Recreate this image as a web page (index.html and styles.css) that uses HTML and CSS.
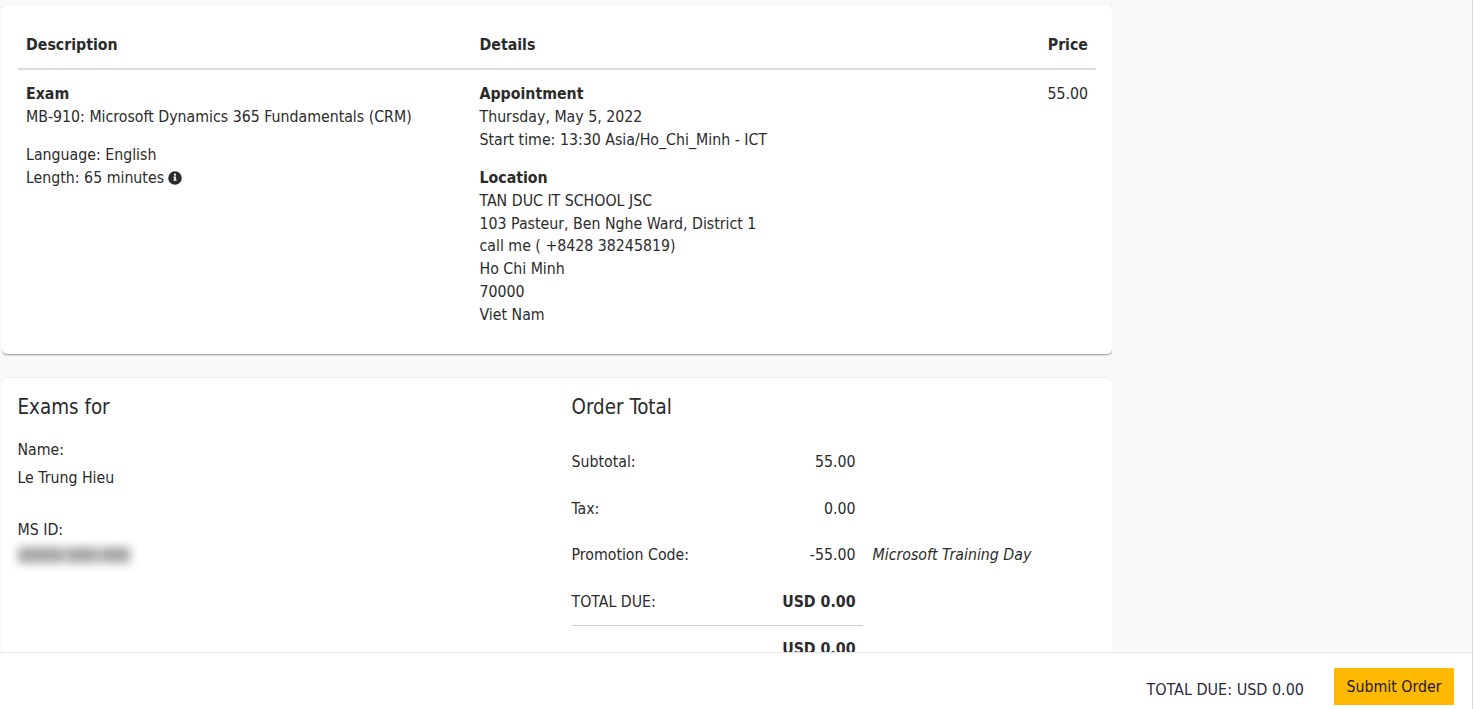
FILE: index.html
```html
<!DOCTYPE html>
<html lang="en">
<head>
  <meta charset="UTF-8">
  <title>Checkout</title>
  <link rel="stylesheet" href="styles.css">
</head>
<body>

<div class="page">
  <!-- order lines -->
  <div class="card card-items">
    <table class="items">
      <thead>
        <tr>
          <th class="col-desc">Description</th>
          <th class="col-details">Details</th>
          <th class="col-price">Price</th>
        </tr>
      </thead>
      <tbody>
        <tr>
          <td>
            <div class="block">
              <strong>Exam</strong><br>
              MB-910: Microsoft Dynamics 365 Fundamentals (CRM)
            </div>
            <div class="block">
              Language: English<br>
              Length: 65 minutes
              <svg class="info-icon" viewBox="0 0 512 512" width="14" height="14" aria-hidden="true">
                <path fill="#2b2b2b" fill-rule="evenodd" d="M256 8a248 248 0 1 0 0 496 248 248 0 0 0 0-496zm0 84a42 42 0 1 1 0 84 42 42 0 0 1 0-84zm56 254c0 7-5 12-12 12h-88c-7 0-12-5-12-12v-24c0-7 5-12 12-12h12v-64h-12c-7 0-12-5-12-12v-24c0-7 5-12 12-12h64c7 0 12 5 12 12v100h12c7 0 12 5 12 12z"/>
              </svg>
            </div>
          </td>
          <td>
            <div class="block">
              <strong>Appointment</strong><br>
              Thursday, May 5, 2022<br>
              Start time: 13:30 Asia/Ho_Chi_Minh - ICT
            </div>
            <div class="block">
              <strong>Location</strong><br>
              TAN DUC IT SCHOOL JSC<br>
              103 Pasteur, Ben Nghe Ward, District 1<br>
              call me ( +8428 38245819)<br>
              Ho Chi Minh<br>
              70000<br>
              Viet Nam
            </div>
          </td>
          <td class="col-price">55.00</td>
        </tr>
      </tbody>
    </table>
  </div>

  <!-- candidate and totals -->
  <div class="card card-summary">
    <div class="exams-for">
      <h2>Exams for</h2>
      <p class="field">Name:</p>
      <p class="field">Le Trung Hieu</p>
      <p class="field field-gap">MS ID:</p>
      <div class="blurred-id">
        <span class="blur-chunk blur-long"></span>
        <span class="blur-chunk blur-mid"></span>
        <span class="blur-chunk blur-short"></span>
      </div>
    </div>
    <div class="order-total">
      <h2>Order Total</h2>
      <div class="total-row">
        <div class="total-label">Subtotal:</div>
        <div class="total-value">55.00</div>
      </div>
      <div class="total-row">
        <div class="total-label">Tax:</div>
        <div class="total-value">0.00</div>
      </div>
      <div class="total-row">
        <div class="total-label">Promotion Code:</div>
        <div class="total-value">-55.00</div>
        <div class="total-note">Microsoft Training Day</div>
      </div>
      <div class="total-row">
        <div class="total-label">TOTAL DUE:</div>
        <div class="total-value"><strong>USD 0.00</strong></div>
      </div>
      <div class="total-rule"></div>
      <div class="total-row">
        <div class="total-label"></div>
        <div class="total-value"><strong>USD 0.00</strong></div>
      </div>
    </div>
  </div>
</div>

<!-- sticky footer -->
<div class="submit-bar">
  <span class="submit-total">TOTAL DUE: USD 0.00</span>
  <button class="submit-btn" type="button">Submit Order</button>
</div>

</body>
</html>
```

FILE: styles.css
```css
html, body {
  height: 100%;
}
body {
  margin: 0;
  background-color: #f9f9f9;
  color: #2b2b2b;
  font-family: "DejaVu Sans", "Noto Sans", sans-serif;
  font-stretch: condensed;
  font-size: 15.75px;
  line-height: 23px;
  overflow: hidden;
  border-right: 1px solid #d9d9d9;
  box-sizing: border-box;
}

.page {
  width: 1110px;
  height: 100vh;
  box-sizing: border-box;
  overflow: hidden;
  margin-left: 2px;
  padding: 5px 0 0;
}

.card {
  background-color: #fff;
  border-radius: 5px;
  box-shadow: 0 1px 2px rgba(0, 0, 0, 0.4);
}
.card-items {
  height: 349px;
  padding: 0 16px;
  box-sizing: border-box;
  margin-bottom: 24px;
}
.card-summary {
  display: flex;
  height: 400px;
  padding: 0 16px 0 15.5px;
  box-shadow: 0 0 2px rgba(0, 0, 0, 0.15);
}

/* order lines */
.items {
  width: 1078px;
  border-collapse: collapse;
  table-layout: fixed;
}
.items th {
  height: 64px;
  padding: 15px 8px 0;
  box-sizing: border-box;
  text-align: left;
  border-bottom: 2px solid #dcdcdc;
}
.items td {
  padding: 13px 8px 0;
  vertical-align: top;
  line-height: 22.85px;
}
.col-desc { width: 453.5px; }
.col-details { width: 454.5px; }
.items .col-price {
  text-align: right;
}
.block {
  margin-bottom: 15.4px;
}
.info-icon {
  margin-left: -1px;
  vertical-align: -2px;
}

/* candidate */
h2 {
  margin: 0;
  font-size: 20.4px;
  font-weight: 400;
  line-height: 28px;
}
.exams-for {
  width: 554px;
  padding-top: 15px;
}
.field {
  margin: 0 0 5px;
}
.exams-for h2 {
  margin-bottom: 17px;
}
.field-gap {
  margin-top: 29px;
}
.blurred-id {
  display: flex;
  gap: 2px;
  width: 112px;
  height: 16px;
  margin-top: 6px;
  filter: blur(5px);
}
.blur-chunk {
  display: block;
  height: 16px;
  background-color: #a8a8a8;
}
.blur-long { width: 46px; }
.blur-mid { width: 32px; }
.blur-short { width: 30px; }

/* totals */
.order-total {
  width: 524px;
  padding-top: 15px;
}
.order-total h2 {
  margin-bottom: 29px;
}
.total-row {
  display: flex;
  height: 23px;
  margin-bottom: 23.5px;
}
.total-label {
  width: 180px;
}
.total-value {
  width: 104px;
  text-align: right;
}
.total-note {
  margin-left: 17px;
  font-style: italic;
}
.total-rule {
  width: 291px;
  height: 1px;
  margin: -11px 0 11px;
  background-color: #ccc;
}

/* footer over the page */
.submit-bar {
  position: fixed;
  left: 0;
  right: 1px;
  bottom: 0;
  height: 57px;
  display: flex;
  align-items: flex-start;
  justify-content: flex-end;
  padding: 15px 18px 0 0;
  box-sizing: border-box;
  background-color: #fff;
  border-top: 1px solid #e3e3e3;
}
.submit-total {
  margin: 10px 30px 0 0;
  font-size: 16px;
  color: #2b2b3f;
}
.submit-btn {
  width: 120px;
  height: 37px;
  padding: 0;
  border: 0;
  background-color: #ffb900;
  color: #1a1a1a;
  font: inherit;
}
```
